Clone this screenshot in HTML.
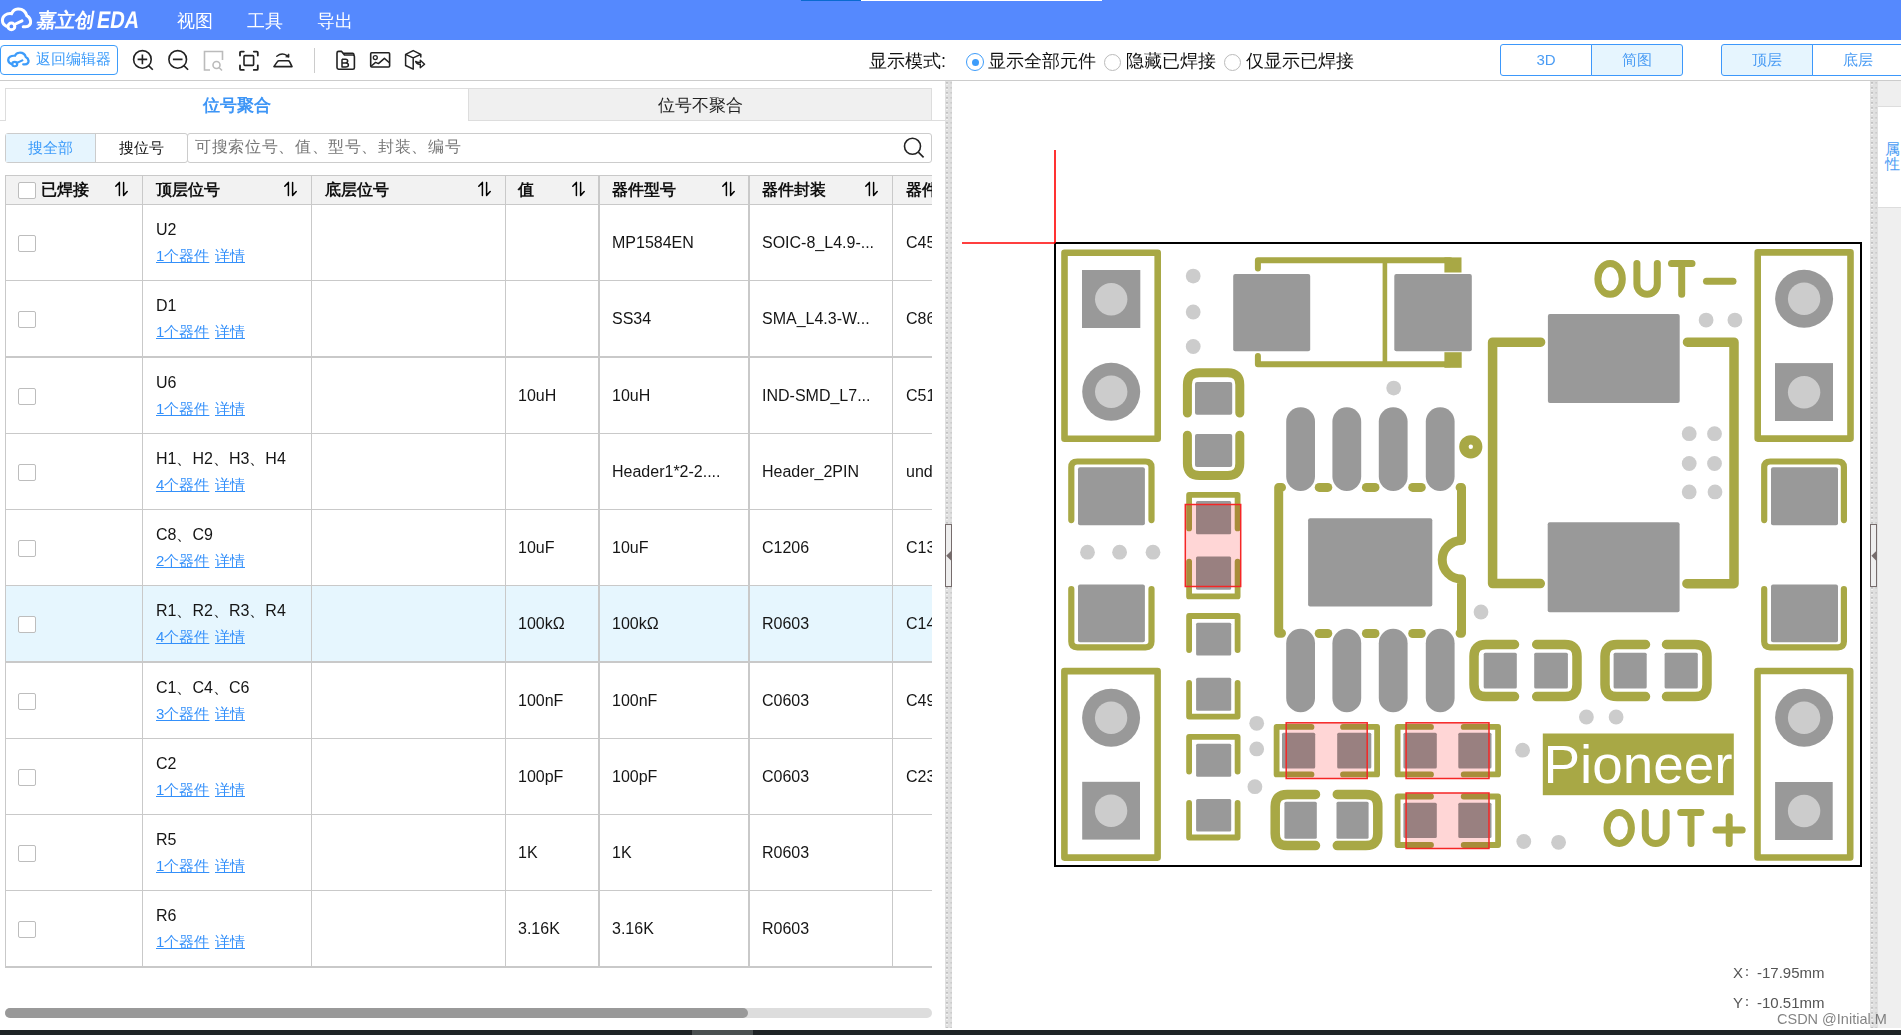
<!DOCTYPE html>
<html><head><meta charset="utf-8">
<style>
*{box-sizing:border-box;margin:0;padding:0}
html,body{width:1901px;height:1035px;overflow:hidden;background:#fff;font-family:"Liberation Sans",sans-serif;color:#222}
.abs{position:absolute;white-space:nowrap}
#hdr{left:0;top:0;width:1901px;height:40px;background:#5589fe}
#hdr .menu{color:#fff;font-size:18px;top:9px}
#tb{left:0;top:40px;width:1901px;height:41px;background:#fff;border-bottom:1px solid #ccc}
.btn{border:1px solid #3d9cfa;border-radius:4px;color:#3d9cfa}
.seg{border:1px solid #3d98fb;color:#4a9cf4;font-size:15px;text-align:center;line-height:30px}
.radio{width:18px;height:18px;border-radius:50%;border:1px solid #bbb}
.lbl{font-size:18px;color:#111;line-height:20px}
#split1,#split2{top:81px;width:7px;height:947px;background:#ddd;
 background-image:radial-gradient(circle,#bbb 0.8px,transparent 1px);background-size:4px 4px}
table{border-collapse:collapse}
.cell{position:absolute;border-right:1px solid #ccc;border-bottom:1px solid #ccc}
.tx{font-size:16px;line-height:18px;color:#151515;position:absolute}
.lnk{font-size:15px;line-height:18px;color:#3490fa;text-decoration:underline;position:absolute}
.cb{position:absolute;width:18px;height:17px;border:1px solid #bdbdbd;border-radius:2px;background:#fff}
.hd{font-size:16px;font-weight:bold;color:#111;position:absolute;top:179px}
.sort{position:absolute;top:180px;font-size:14px;color:#222}
</style></head><body>
<!-- header -->
<div id="hdr" class="abs">
  <svg class="abs" style="left:0;top:0" width="150" height="40" viewBox="0 0 150 40">
    <path d="M23.2 26.8 H25.5 C29 26.8 31 24 30.6 21.3 C30.2 18.5 28.5 16.5 26.8 15.6 C25.5 11.3 22 8.7 17.8 9 C14.8 9.2 12.6 11.2 11.6 13.7 C6.5 13 2.4 16 2.4 20.2 C2.4 23 4.2 25.2 6.6 26.3" fill="none" stroke="#fff" stroke-width="3" stroke-linecap="round"/>
    <circle cx="11.4" cy="26.4" r="3.4" fill="none" stroke="#fff" stroke-width="3"/>
    <path d="M14.4 24.5 L22 20.8" stroke="#fff" stroke-width="3" stroke-linecap="round"/>
    <g transform="skewX(-9)" fill="#fff">
      <text x="40" y="27.5" font-size="20" font-weight="bold" textLength="58" lengthAdjust="spacingAndGlyphs">嘉立创</text>
      <text x="100.5" y="28.2" font-size="24" font-weight="bold" font-family="Liberation Sans" textLength="42" lengthAdjust="spacingAndGlyphs">EDA</text>
    </g>
  </svg>
  <div class="abs" style="left:801px;top:0;width:60px;height:1px;background:#0a6ad0"></div>
  <div class="abs" style="left:861px;top:0;width:241px;height:1px;background:#fff"></div>
  <div class="abs menu" style="left:177px">视图</div>
  <div class="abs menu" style="left:247px">工具</div>
  <div class="abs menu" style="left:317px">导出</div>
</div>
<!-- toolbar -->
<div id="tb" class="abs">
  <div class="abs btn" style="left:0;top:5px;width:118px;height:30px"></div>
  <svg class="abs" style="left:0;top:0" width="40" height="40" viewBox="0 0 40 40"><g transform="translate(6.5,6.8) scale(0.72,0.655)"><path d="M23.2 26.8 H25.5 C29 26.8 31 24 30.6 21.3 C30.2 18.5 28.5 16.5 26.8 15.6 C25.5 11.3 22 8.7 17.8 9 C14.8 9.2 12.6 11.2 11.6 13.7 C6.5 13 2.4 16 2.4 20.2 C2.4 23 4.2 25.2 6.6 26.3" fill="none" stroke="#3d9cfa" stroke-width="3.2" stroke-linecap="round"/><circle cx="11.4" cy="26.4" r="3.4" fill="none" stroke="#3d9cfa" stroke-width="3.2"/><path d="M14.4 24.5 L22 20.8" stroke="#3d9cfa" stroke-width="3.2" stroke-linecap="round"/></g></svg>
  <div class="abs" style="left:36px;top:10px;font-size:15px;line-height:17px;color:#3d9cfa">返回编辑器</div>
  <svg class="abs" style="left:0;top:0" width="440" height="40" viewBox="0 40 440 40" fill="none" stroke="#222" stroke-width="1.6">
    <circle cx="142.4" cy="59.4" r="8.8"/><path d="M148.6 65.6 L152.8 69.8 M137.6 59.4 H147.2 M142.4 54.6 V64.2"/>
    <circle cx="177.7" cy="59.4" r="8.8"/><path d="M183.9 65.6 L188.1 69.8 M172.9 59.4 H182.5"/>
    <g stroke="#bbb"><path d="M215 51.5 H204.5 V70 H210 M222.5 60 V51.5 H215"/><circle cx="216.5" cy="65" r="3.5"/><path d="M219 67.5 L222 70.5"/></g>
    <path d="M240 55.5 V52.6 Q240 51.6 241 51.6 H243.8 M253.8 51.6 H256.8 Q257.8 51.6 257.8 52.6 V55.5 M257.8 65.5 V68.9 Q257.8 69.9 256.8 69.9 H253.8 M243.8 69.9 H241 Q240 69.9 240 68.9 V65.5" stroke-width="1.8" stroke-linecap="round"/>
    <rect x="244" y="55.6" width="9.6" height="9.8" rx="0.8" stroke-width="1.6"/>
    <path d="M273.9 66.6 L277.4 61.6 Q278 60.7 279.2 60.7 H288 Q289.2 60.7 289.6 61.6 L292 66.6 Z" stroke-width="1.6" stroke-linejoin="round"/>
    <path d="M276.8 56.2 Q282 52.2 287 55.6" stroke-width="1.4" stroke-linecap="round"/><path d="M288.9 53.9 L289 57.3 L285.7 56.8 Z" fill="#222" stroke-width="0.8" stroke-linejoin="round"/>
    <path d="M314.5 48 V73" stroke="#ccc" stroke-width="1"/>
    <path d="M337 67.6 V53 Q337 51.4 338.6 51.4 H341.6 L344.5 55 H352.9 Q354.4 55 354.4 56.5 V67.7 Q354.4 69.2 352.9 69.2 H338.6 Q337 69.2 337 67.6 Z" stroke-width="1.6" stroke-linejoin="round"/>
    <path d="M343.6 53.3 H352.6 Q353.9 53.3 353.9 54.8" stroke-width="1.5" stroke-linecap="round"/>
    <path d="M342 59.2 H345.6 Q347.7 59.2 347.7 61.1 Q347.7 62.9 345.4 62.9 H342 M345.4 62.9 Q348.4 62.9 348.4 64.9 Q348.4 66.9 345.6 66.9 H342 V59.2" stroke-width="1.5" stroke-linejoin="round"/>
    <rect x="370.7" y="52.7" width="18.9" height="14.3" rx="1" stroke-width="1.6"/>
    <circle cx="375.3" cy="57.6" r="2" stroke-width="1.3"/>
    <path d="M371 66.3 L375.6 62.4 L378.4 63.6 L384.4 58.4 L389.4 62.8" stroke-width="1.5" stroke-linejoin="round"/>
    <path d="M413.2 50.6 L405.6 54.4 L413.2 57.9 L420.8 54.4 Z M405.6 54.4 V65.5 L413.2 69.2 V57.9 M420.8 54.4 V57.6" stroke-width="1.5" stroke-linejoin="round"/>
    <path d="M415.6 61.4 C416.2 63.6 417.8 64.5 420.3 64.3 V67.8 L424.6 64.2 L420.3 60.3 V62.5 C418.4 62.6 416.8 62.4 415.6 61.4 Z" stroke-width="1.4" stroke-linejoin="round"/>
  </svg>
  <div class="abs lbl" style="left:869px;top:11px">显示模式:</div>
  <div class="abs radio" style="left:966px;top:13px;border-color:#3d9cfa"></div>
  <div class="abs" style="left:971.5px;top:18.5px;width:7px;height:7px;border-radius:50%;background:#3d9cfa"></div>
  <div class="abs lbl" style="left:987.5px;top:11px">显示全部元件</div>
  <div class="abs radio" style="left:1103.5px;top:13.5px;width:17px;height:17px"></div>
  <div class="abs lbl" style="left:1126px;top:11px">隐藏已焊接</div>
  <div class="abs radio" style="left:1223.5px;top:13.5px;width:17px;height:17px"></div>
  <div class="abs lbl" style="left:1246px;top:11px">仅显示已焊接</div>
  <div class="abs seg" style="left:1500px;top:4px;width:92px;height:32px;border-radius:3px 0 0 3px">3D</div>
  <div class="abs seg" style="left:1591px;top:4px;width:92px;height:32px;border-radius:0 3px 3px 0;background:#e6f5fe">简图</div>
  <div class="abs seg" style="left:1721px;top:4px;width:92px;height:32px;border-radius:3px 0 0 3px;background:#e6f5fe">顶层</div>
  <div class="abs seg" style="left:1812px;top:4px;width:92px;height:32px;border-radius:0 3px 3px 0">底层</div>
</div>
<!--LEFT-->
<div class="abs" style="left:0;top:120px;width:5px;height:1px;background:#ddd"></div>
<div class="abs" style="left:932px;top:120px;width:13px;height:1px;background:#ddd"></div>
<div class="abs" style="left:5px;top:88px;width:464px;height:33px;border:1px solid #ddd;border-bottom:none;background:#fff"></div>
<div class="abs" style="left:203px;top:96px;font-size:17px;line-height:20px;font-weight:bold;color:#3d95f6">位号聚合</div>
<div class="abs" style="left:468px;top:88px;width:464px;height:33px;border:1px solid #ddd;background:#f0f0f0"></div>
<div class="abs" style="left:658px;top:96px;font-size:17px;line-height:20px;color:#222">位号不聚合</div>
<div class="abs" style="left:5px;top:133px;width:183px;height:30px;border:1px solid #ccc;border-radius:3px;background:#fff"></div>
<div class="abs" style="left:6px;top:134px;width:90px;height:28px;background:#e6f5fe;border-right:1px solid #ccc"></div>
<div class="abs" style="left:28px;top:139px;font-size:15px;line-height:18px;color:#3d9cfa">搜全部</div>
<div class="abs" style="left:119px;top:139px;font-size:15px;line-height:18px;color:#111">搜位号</div>
<div class="abs" style="left:187px;top:133px;width:745px;height:30px;border:1px solid #ccc;border-radius:3px;background:#fff"></div>
<div class="abs" style="left:195px;top:137px;letter-spacing:0.65px;font-size:16px;line-height:20px;color:#777">可搜索位号、值、型号、封装、编号</div>
<svg class="abs" style="left:900px;top:134px" width="30" height="28" viewBox="900 134 30 28"><circle cx="912.5" cy="146.3" r="8" fill="none" stroke="#222" stroke-width="1.6"/><path d="M918.3 152.1 L923.6 157.4" stroke="#222" stroke-width="1.6"/></svg>
<div class="abs" style="left:0;top:0;width:932px;height:1035px;overflow:hidden">
<div class="abs" style="left:5px;top:175px;width:1000px;height:29px;background:#f2f2f2"></div>
<div class="abs" style="left:5px;top:585px;width:1000px;height:76px;background:#e6f6fe"></div>
<div class="abs" style="left:5px;top:175px;width:1000px;height:1px;background:#c9c9c9"></div>
<div class="abs" style="left:5px;top:204px;width:1000px;height:1px;background:#c9c9c9"></div>
<div class="abs" style="left:5px;top:280px;width:1000px;height:1px;background:#c9c9c9"></div>
<div class="abs" style="left:5px;top:356px;width:1000px;height:2px;background:#c9c9c9"></div>
<div class="abs" style="left:5px;top:433px;width:1000px;height:1px;background:#c9c9c9"></div>
<div class="abs" style="left:5px;top:509px;width:1000px;height:1px;background:#c9c9c9"></div>
<div class="abs" style="left:5px;top:585px;width:1000px;height:1px;background:#c9c9c9"></div>
<div class="abs" style="left:5px;top:661px;width:1000px;height:2px;background:#c9c9c9"></div>
<div class="abs" style="left:5px;top:738px;width:1000px;height:1px;background:#c9c9c9"></div>
<div class="abs" style="left:5px;top:814px;width:1000px;height:1px;background:#c9c9c9"></div>
<div class="abs" style="left:5px;top:890px;width:1000px;height:1px;background:#c9c9c9"></div>
<div class="abs" style="left:5px;top:966px;width:1000px;height:2px;background:#c9c9c9"></div>
<div class="abs" style="left:5px;top:175px;width:1px;height:793px;background:#c9c9c9"></div>
<div class="abs" style="left:142px;top:175px;width:1px;height:793px;background:#c9c9c9"></div>
<div class="abs" style="left:311px;top:175px;width:1px;height:793px;background:#c9c9c9"></div>
<div class="abs" style="left:505px;top:175px;width:1px;height:793px;background:#c9c9c9"></div>
<div class="abs" style="left:598px;top:175px;width:2px;height:793px;background:#c9c9c9"></div>
<div class="abs" style="left:748px;top:175px;width:2px;height:793px;background:#c9c9c9"></div>
<div class="abs" style="left:892px;top:175px;width:1px;height:793px;background:#c9c9c9"></div>
<div class="abs hd" style="left:41px;top:180px;line-height:19px">已焊接</div>
<div class="abs hd" style="left:156px;top:180px;line-height:19px">顶层位号</div>
<div class="abs hd" style="left:325px;top:180px;line-height:19px">底层位号</div>
<div class="abs hd" style="left:518px;top:180px;line-height:19px">值</div>
<div class="abs hd" style="left:612px;top:180px;line-height:19px">器件型号</div>
<div class="abs hd" style="left:762px;top:180px;line-height:19px">器件封装</div>
<div class="abs hd" style="left:906px;top:180px;line-height:19px">器件</div>
<svg class="abs" style="left:115px;top:181px" width="14" height="16" viewBox="0 0 14 16"><path d="M0.8 5.2 L4.4 1.4 V14.5 M8.6 1.4 V14.5 L12.2 10.6" fill="none" stroke="#000" stroke-width="1.5" stroke-linecap="round" stroke-linejoin="round"/></svg>
<svg class="abs" style="left:284px;top:181px" width="14" height="16" viewBox="0 0 14 16"><path d="M0.8 5.2 L4.4 1.4 V14.5 M8.6 1.4 V14.5 L12.2 10.6" fill="none" stroke="#000" stroke-width="1.5" stroke-linecap="round" stroke-linejoin="round"/></svg>
<svg class="abs" style="left:478px;top:181px" width="14" height="16" viewBox="0 0 14 16"><path d="M0.8 5.2 L4.4 1.4 V14.5 M8.6 1.4 V14.5 L12.2 10.6" fill="none" stroke="#000" stroke-width="1.5" stroke-linecap="round" stroke-linejoin="round"/></svg>
<svg class="abs" style="left:572px;top:181px" width="14" height="16" viewBox="0 0 14 16"><path d="M0.8 5.2 L4.4 1.4 V14.5 M8.6 1.4 V14.5 L12.2 10.6" fill="none" stroke="#000" stroke-width="1.5" stroke-linecap="round" stroke-linejoin="round"/></svg>
<svg class="abs" style="left:722px;top:181px" width="14" height="16" viewBox="0 0 14 16"><path d="M0.8 5.2 L4.4 1.4 V14.5 M8.6 1.4 V14.5 L12.2 10.6" fill="none" stroke="#000" stroke-width="1.5" stroke-linecap="round" stroke-linejoin="round"/></svg>
<svg class="abs" style="left:865px;top:181px" width="14" height="16" viewBox="0 0 14 16"><path d="M0.8 5.2 L4.4 1.4 V14.5 M8.6 1.4 V14.5 L12.2 10.6" fill="none" stroke="#000" stroke-width="1.5" stroke-linecap="round" stroke-linejoin="round"/></svg>
<div class="cb" style="left:18px;top:182px"></div>
<div class="cb" style="left:18px;top:235px"></div>
<div class="abs tx" style="left:156px;top:221px">U2</div>
<div class="abs lnk" style="left:156px;top:247px">1个器件</div>
<div class="abs lnk" style="left:215px;top:247px">详情</div>
<div class="abs tx" style="left:612px;top:234px">MP1584EN</div>
<div class="abs tx" style="left:762px;top:234px">SOIC-8_L4.9-...</div>
<div class="abs tx" style="left:906px;top:234px">C45</div>
<div class="cb" style="left:18px;top:311px"></div>
<div class="abs tx" style="left:156px;top:297px">D1</div>
<div class="abs lnk" style="left:156px;top:323px">1个器件</div>
<div class="abs lnk" style="left:215px;top:323px">详情</div>
<div class="abs tx" style="left:612px;top:310px">SS34</div>
<div class="abs tx" style="left:762px;top:310px">SMA_L4.3-W...</div>
<div class="abs tx" style="left:906px;top:310px">C86</div>
<div class="cb" style="left:18px;top:388px"></div>
<div class="abs tx" style="left:156px;top:374px">U6</div>
<div class="abs lnk" style="left:156px;top:400px">1个器件</div>
<div class="abs lnk" style="left:215px;top:400px">详情</div>
<div class="abs tx" style="left:518px;top:387px">10uH</div>
<div class="abs tx" style="left:612px;top:387px">10uH</div>
<div class="abs tx" style="left:762px;top:387px">IND-SMD_L7...</div>
<div class="abs tx" style="left:906px;top:387px">C51</div>
<div class="cb" style="left:18px;top:464px"></div>
<div class="abs tx" style="left:156px;top:450px">H1、H2、H3、H4</div>
<div class="abs lnk" style="left:156px;top:476px">4个器件</div>
<div class="abs lnk" style="left:215px;top:476px">详情</div>
<div class="abs tx" style="left:612px;top:463px">Header1*2-2....</div>
<div class="abs tx" style="left:762px;top:463px">Header_2PIN</div>
<div class="abs tx" style="left:906px;top:463px">und</div>
<div class="cb" style="left:18px;top:540px"></div>
<div class="abs tx" style="left:156px;top:526px">C8、C9</div>
<div class="abs lnk" style="left:156px;top:552px">2个器件</div>
<div class="abs lnk" style="left:215px;top:552px">详情</div>
<div class="abs tx" style="left:518px;top:539px">10uF</div>
<div class="abs tx" style="left:612px;top:539px">10uF</div>
<div class="abs tx" style="left:762px;top:539px">C1206</div>
<div class="abs tx" style="left:906px;top:539px">C13</div>
<div class="cb" style="left:18px;top:616px"></div>
<div class="abs tx" style="left:156px;top:602px">R1、R2、R3、R4</div>
<div class="abs lnk" style="left:156px;top:628px">4个器件</div>
<div class="abs lnk" style="left:215px;top:628px">详情</div>
<div class="abs tx" style="left:518px;top:615px">100kΩ</div>
<div class="abs tx" style="left:612px;top:615px">100kΩ</div>
<div class="abs tx" style="left:762px;top:615px">R0603</div>
<div class="abs tx" style="left:906px;top:615px">C14</div>
<div class="cb" style="left:18px;top:693px"></div>
<div class="abs tx" style="left:156px;top:679px">C1、C4、C6</div>
<div class="abs lnk" style="left:156px;top:705px">3个器件</div>
<div class="abs lnk" style="left:215px;top:705px">详情</div>
<div class="abs tx" style="left:518px;top:692px">100nF</div>
<div class="abs tx" style="left:612px;top:692px">100nF</div>
<div class="abs tx" style="left:762px;top:692px">C0603</div>
<div class="abs tx" style="left:906px;top:692px">C49</div>
<div class="cb" style="left:18px;top:769px"></div>
<div class="abs tx" style="left:156px;top:755px">C2</div>
<div class="abs lnk" style="left:156px;top:781px">1个器件</div>
<div class="abs lnk" style="left:215px;top:781px">详情</div>
<div class="abs tx" style="left:518px;top:768px">100pF</div>
<div class="abs tx" style="left:612px;top:768px">100pF</div>
<div class="abs tx" style="left:762px;top:768px">C0603</div>
<div class="abs tx" style="left:906px;top:768px">C23</div>
<div class="cb" style="left:18px;top:845px"></div>
<div class="abs tx" style="left:156px;top:831px">R5</div>
<div class="abs lnk" style="left:156px;top:857px">1个器件</div>
<div class="abs lnk" style="left:215px;top:857px">详情</div>
<div class="abs tx" style="left:518px;top:844px">1K</div>
<div class="abs tx" style="left:612px;top:844px">1K</div>
<div class="abs tx" style="left:762px;top:844px">R0603</div>
<div class="cb" style="left:18px;top:921px"></div>
<div class="abs tx" style="left:156px;top:907px">R6</div>
<div class="abs lnk" style="left:156px;top:933px">1个器件</div>
<div class="abs lnk" style="left:215px;top:933px">详情</div>
<div class="abs tx" style="left:518px;top:920px">3.16K</div>
<div class="abs tx" style="left:612px;top:920px">3.16K</div>
<div class="abs tx" style="left:762px;top:920px">R0603</div>
</div>
<div class="abs" style="left:5px;top:1008px;width:927px;height:10px;border-radius:5px;background:#ddd"></div>
<div class="abs" style="left:5px;top:1008px;width:743px;height:10px;border-radius:5px;background:#999"></div>
<!--/LEFT-->
<!--PCB-->
<svg class="abs" style="left:952px;top:81px" width="918" height="947" viewBox="952 81 918 947"><rect x="1055" y="243" width="806" height="623" fill="none" stroke="#000" stroke-width="2"/><path d="M1055 150 V243 M962 243 H1055" stroke="#f00" stroke-width="1.6" fill="none"/><path d="M1064.5 252.7 H1157.7 V438.8 H1064.5 Z" fill="none" stroke="#a8a845" stroke-width="6.6" stroke-linecap="round" stroke-linejoin="round"/><path d="M1757.7 252.4 H1850.5 V438.6 H1757.7 Z" fill="none" stroke="#a8a845" stroke-width="6.6" stroke-linecap="round" stroke-linejoin="round"/><path d="M1064.4 671.1 H1157.6 V857.6 H1064.4 Z" fill="none" stroke="#a8a845" stroke-width="6.6" stroke-linecap="round" stroke-linejoin="round"/><path d="M1757.5 671.0 H1850.2 V857.5 H1757.5 Z" fill="none" stroke="#a8a845" stroke-width="6.6" stroke-linecap="round" stroke-linejoin="round"/><rect x="1082.0" y="270.0" width="58.3" height="58.0" rx="0.0" fill="#999999"/><circle cx="1111.2" cy="299.2" r="16.2" fill="#cccccc"/><circle cx="1111.2" cy="391.7" r="29.0" fill="#999999"/><circle cx="1111.2" cy="391.7" r="16.2" fill="#cccccc"/><circle cx="1804.1" cy="298.8" r="29.0" fill="#999999"/><circle cx="1804.1" cy="298.8" r="16.2" fill="#cccccc"/><rect x="1775.0" y="363.1" width="58.0" height="57.9" rx="0.0" fill="#999999"/><circle cx="1804.1" cy="392.2" r="16.2" fill="#cccccc"/><circle cx="1111.1" cy="717.8" r="29.0" fill="#999999"/><circle cx="1111.1" cy="717.8" r="16.2" fill="#cccccc"/><rect x="1082.2" y="781.8" width="57.8" height="57.8" rx="0.0" fill="#999999"/><circle cx="1111.1" cy="810.7" r="16.2" fill="#cccccc"/><circle cx="1804.1" cy="717.7" r="29.0" fill="#999999"/><circle cx="1804.1" cy="717.7" r="16.2" fill="#cccccc"/><rect x="1775.1" y="782.0" width="57.6" height="58.0" rx="0.0" fill="#999999"/><circle cx="1804.1" cy="811.0" r="16.2" fill="#cccccc"/><circle cx="1193.2" cy="276.1" r="7.4" fill="#cccccc"/><circle cx="1193.2" cy="312.0" r="7.4" fill="#cccccc"/><circle cx="1193.2" cy="346.5" r="7.4" fill="#cccccc"/><circle cx="1393.7" cy="388.1" r="7.4" fill="#cccccc"/><circle cx="1706.1" cy="320.1" r="7.4" fill="#cccccc"/><circle cx="1734.9" cy="320.1" r="7.4" fill="#cccccc"/><circle cx="1689.2" cy="433.7" r="7.4" fill="#cccccc"/><circle cx="1714.5" cy="433.7" r="7.4" fill="#cccccc"/><circle cx="1689.2" cy="463.5" r="7.4" fill="#cccccc"/><circle cx="1714.5" cy="463.5" r="7.4" fill="#cccccc"/><circle cx="1689.2" cy="491.9" r="7.4" fill="#cccccc"/><circle cx="1715.0" cy="491.9" r="7.4" fill="#cccccc"/><circle cx="1087.5" cy="552.2" r="7.4" fill="#cccccc"/><circle cx="1119.6" cy="552.2" r="7.4" fill="#cccccc"/><circle cx="1153.0" cy="552.2" r="7.4" fill="#cccccc"/><circle cx="1481.0" cy="612.0" r="7.4" fill="#cccccc"/><circle cx="1256.7" cy="723.3" r="7.4" fill="#cccccc"/><circle cx="1256.7" cy="748.9" r="7.4" fill="#cccccc"/><circle cx="1254.9" cy="786.7" r="7.4" fill="#cccccc"/><circle cx="1586.4" cy="717.0" r="7.4" fill="#cccccc"/><circle cx="1616.1" cy="717.0" r="7.4" fill="#cccccc"/><circle cx="1522.6" cy="750.2" r="7.4" fill="#cccccc"/><circle cx="1523.8" cy="841.5" r="7.4" fill="#cccccc"/><circle cx="1558.6" cy="842.3" r="7.4" fill="#cccccc"/><rect x="1233.2" y="274.0" width="77.0" height="77.2" rx="2.0" fill="#999999"/><rect x="1394.3" y="274.1" width="77.5" height="77.1" rx="2.0" fill="#999999"/><path d="M1257.9 268.4 V260.3 H1450 M1257.9 356 V364.2 H1450" fill="none" stroke="#a8a845" stroke-width="6.0" stroke-linecap="round" stroke-linejoin="round"/><path d="M1384.9 260.3 V364.2" fill="none" stroke="#a8a845" stroke-width="4.6" stroke-linecap="butt" stroke-linejoin="round"/><rect x="1444.4" y="257.4" width="17.1" height="15.1" rx="0.0" fill="#a8a845"/><rect x="1444.4" y="352.2" width="17.3" height="15.6" rx="0.0" fill="#a8a845"/><rect x="1195.0" y="382.0" width="37.2" height="32.8" rx="2.0" fill="#999999"/><rect x="1195.0" y="434.1" width="37.2" height="32.9" rx="2.0" fill="#999999"/><path d="M1187.4 413 V384.7 Q1187.4 372.7 1199.4 372.7 H1227.8 Q1239.8 372.7 1239.8 384.7 V413" fill="none" stroke="#a8a845" stroke-width="9.0" stroke-linecap="round" stroke-linejoin="round"/><path d="M1187.4 435.2 V463.5 Q1187.4 475.5 1199.4 475.5 H1227.8 Q1239.8 475.5 1239.8 463.5 V435.2" fill="none" stroke="#a8a845" stroke-width="9.0" stroke-linecap="round" stroke-linejoin="round"/><rect x="1078.0" y="467.3" width="66.9" height="57.9" rx="2.0" fill="#999999"/><rect x="1078.0" y="584.4" width="66.9" height="57.8" rx="2.0" fill="#999999"/><path d="M1071.3 520.1 V467.3 Q1071.3 461.5 1077.3 461.5 H1145.5 Q1151.5 461.5 1151.5 467.3 V520.1" fill="none" stroke="#a8a845" stroke-width="6.2" stroke-linecap="round" stroke-linejoin="round"/><path d="M1071.3 589.1 V641.5 Q1071.3 647.3 1077.3 647.3 H1145.5 Q1151.5 647.3 1151.5 641.5 V589.1" fill="none" stroke="#a8a845" stroke-width="6.2" stroke-linecap="round" stroke-linejoin="round"/><rect x="1771.0" y="467.3" width="67.0" height="57.9" rx="2.0" fill="#999999"/><rect x="1771.0" y="584.4" width="67.0" height="57.8" rx="2.0" fill="#999999"/><path d="M1764.2 520.1 V467.3 Q1764.2 461.5 1770.2 461.5 H1837.9 Q1843.9 461.5 1843.9 467.3 V520.1" fill="none" stroke="#a8a845" stroke-width="6.2" stroke-linecap="round" stroke-linejoin="round"/><path d="M1764.2 589.1 V641.5 Q1764.2 647.3 1770.2 647.3 H1837.9 Q1843.9 647.3 1843.9 641.5 V589.1" fill="none" stroke="#a8a845" stroke-width="6.2" stroke-linecap="round" stroke-linejoin="round"/><rect x="1196.0" y="500.9" width="35.1" height="33.4" rx="1.5" fill="#999999"/><rect x="1196.0" y="556.6" width="35.1" height="33.1" rx="1.5" fill="#999999"/><path d="M1189.1 528.4 V494.9 H1237.6 V528.4 M1189.1 561.6 V596.4 H1237.6 V561.6" fill="none" stroke="#a8a845" stroke-width="5.8" stroke-linecap="round" stroke-linejoin="round"/><rect x="1196.1" y="622.7" width="35.1" height="32.7" rx="1.5" fill="#999999"/><rect x="1196.1" y="677.8" width="35.1" height="32.9" rx="1.5" fill="#999999"/><path d="M1189.1 650.1 V616 H1237.6 V650.1 M1189.1 682.8 V716.6 H1237.6 V682.8" fill="none" stroke="#a8a845" stroke-width="5.8" stroke-linecap="round" stroke-linejoin="round"/><rect x="1196.1" y="743.8" width="35.1" height="32.9" rx="1.5" fill="#999999"/><rect x="1196.1" y="798.9" width="35.1" height="32.7" rx="1.5" fill="#999999"/><path d="M1189.1 771.5 V736.8 H1237.6 V771.5 M1189.1 802.9 V837.5 H1237.6 V802.9" fill="none" stroke="#a8a845" stroke-width="5.8" stroke-linecap="round" stroke-linejoin="round"/><rect x="1286.2" y="407.3" width="28.8" height="83.6" rx="14.4" fill="#999999"/><rect x="1286.2" y="628.8" width="28.8" height="83.5" rx="14.4" fill="#999999"/><rect x="1332.4" y="407.3" width="28.8" height="83.6" rx="14.4" fill="#999999"/><rect x="1332.4" y="628.8" width="28.8" height="83.5" rx="14.4" fill="#999999"/><rect x="1378.8" y="407.3" width="28.8" height="83.6" rx="14.4" fill="#999999"/><rect x="1378.8" y="628.8" width="28.8" height="83.5" rx="14.4" fill="#999999"/><rect x="1425.8" y="407.3" width="28.8" height="83.6" rx="14.4" fill="#999999"/><rect x="1425.8" y="628.8" width="28.8" height="83.5" rx="14.4" fill="#999999"/><rect x="1308.1" y="518.2" width="124.2" height="88.3" rx="2.0" fill="#999999"/><path d="M1281.5 487.4 H1278.7 V633.2 H1281.5" fill="none" stroke="#a8a845" stroke-width="9.0" stroke-linecap="round" stroke-linejoin="round"/><path d="M1460.1 487.4 H1461.5 V540.5 A19.3 19.3 0 0 0 1461.5 579.1 V633.2 H1460.1" fill="none" stroke="#a8a845" stroke-width="9.0" stroke-linecap="round" stroke-linejoin="round"/><path d="M1319.2 487.4 H1327.8" fill="none" stroke="#a8a845" stroke-width="9.0" stroke-linecap="round" stroke-linejoin="round"/><path d="M1319.2 633.5 H1327.8" fill="none" stroke="#a8a845" stroke-width="9.0" stroke-linecap="round" stroke-linejoin="round"/><path d="M1366.4 487.4 H1375.0" fill="none" stroke="#a8a845" stroke-width="9.0" stroke-linecap="round" stroke-linejoin="round"/><path d="M1366.4 633.5 H1375.0" fill="none" stroke="#a8a845" stroke-width="9.0" stroke-linecap="round" stroke-linejoin="round"/><path d="M1412.7 487.4 H1421.3" fill="none" stroke="#a8a845" stroke-width="9.0" stroke-linecap="round" stroke-linejoin="round"/><path d="M1412.7 633.5 H1421.3" fill="none" stroke="#a8a845" stroke-width="9.0" stroke-linecap="round" stroke-linejoin="round"/><circle cx="1470.8" cy="446.8" r="6.9" fill="none" stroke="#a8a845" stroke-width="9.4"/><rect x="1547.9" y="314.0" width="131.8" height="88.9" rx="2.0" fill="#999999"/><rect x="1547.7" y="522.3" width="131.9" height="90.0" rx="2.0" fill="#999999"/><path d="M1540.6 342.2 H1492.6 V583.6 H1540.3" fill="none" stroke="#a8a845" stroke-width="9.5" stroke-linecap="round" stroke-linejoin="round"/><path d="M1687.5 342.2 H1734 V583.7 H1686.9" fill="none" stroke="#a8a845" stroke-width="9.5" stroke-linecap="round" stroke-linejoin="round"/><path d="M1597.9 278.9 A12.2 15.45 0 1 0 1622.3 278.9 A12.2 15.45 0 1 0 1597.9 278.9 Z" fill="none" stroke="#a8a845" stroke-width="7.0" stroke-linecap="round" stroke-linejoin="round"/><path d="M1636.9 263.4 V284.1 A10.2 10.2 0 0 0 1657.3 284.1 V263.4" fill="none" stroke="#a8a845" stroke-width="7.0" stroke-linecap="round" stroke-linejoin="round"/><path d="M1671.5 263.4 H1692 M1681.7 263.4 V294.3" fill="none" stroke="#a8a845" stroke-width="7.0" stroke-linecap="round" stroke-linejoin="round"/><path d="M1706.5 281.2 H1733" fill="none" stroke="#a8a845" stroke-width="7.0" stroke-linecap="round" stroke-linejoin="round"/><path d="M1607 828 A12.2 15.5 0 1 0 1631.4 828 A12.2 15.5 0 1 0 1607 828 Z" fill="none" stroke="#a8a845" stroke-width="7.0" stroke-linecap="round" stroke-linejoin="round"/><path d="M1645.3 812.5 V833.2 A10.4 10.4 0 0 0 1666.1 833.2 V812.5" fill="none" stroke="#a8a845" stroke-width="7.0" stroke-linecap="round" stroke-linejoin="round"/><path d="M1680.7 812.5 H1700.9 M1691 812.5 V843.4" fill="none" stroke="#a8a845" stroke-width="7.0" stroke-linecap="round" stroke-linejoin="round"/><path d="M1716 830 H1742.2 M1729.2 816.8 V843.4" fill="none" stroke="#a8a845" stroke-width="7.0" stroke-linecap="round" stroke-linejoin="round"/><rect x="1542.8" y="733.5" width="191.0" height="61.7" rx="0.0" fill="#a8a845"/><text x="1543.5" y="783.3" font-family="Liberation Sans" font-size="54" fill="#fff" textLength="189" lengthAdjust="spacingAndGlyphs">Pioneer</text><path d="M1514.5 644.5 H1486.0 Q1474.0 644.5 1474.0 656.5 V684.6 Q1474.0 696.6 1486.0 696.6 H1514.5" fill="none" stroke="#a8a845" stroke-width="9.5" stroke-linecap="round" stroke-linejoin="round"/><path d="M1536.7 644.5 H1565.0 Q1577.0 644.5 1577.0 656.5 V684.6 Q1577.0 696.6 1565.0 696.6 H1536.7" fill="none" stroke="#a8a845" stroke-width="9.5" stroke-linecap="round" stroke-linejoin="round"/><rect x="1483.7" y="652.7" width="33.1" height="35.8" rx="1.5" fill="#999999"/><rect x="1534.2" y="652.7" width="33.7" height="35.8" rx="1.5" fill="#999999"/><path d="M1645.5 644.5 H1617.0 Q1605.0 644.5 1605.0 656.5 V684.6 Q1605.0 696.6 1617.0 696.6 H1645.5" fill="none" stroke="#a8a845" stroke-width="9.5" stroke-linecap="round" stroke-linejoin="round"/><path d="M1666.5 644.5 H1695.0 Q1707.0 644.5 1707.0 656.5 V684.6 Q1707.0 696.6 1695.0 696.6 H1666.5" fill="none" stroke="#a8a845" stroke-width="9.5" stroke-linecap="round" stroke-linejoin="round"/><rect x="1613.6" y="652.7" width="33.1" height="35.8" rx="1.5" fill="#999999"/><rect x="1664.6" y="652.7" width="33.2" height="35.8" rx="1.5" fill="#999999"/><path d="M1315.5 794.4 H1287.2 Q1275.2 794.4 1275.2 806.4 V833.6 Q1275.2 845.6 1287.2 845.6 H1315.5" fill="none" stroke="#a8a845" stroke-width="9.5" stroke-linecap="round" stroke-linejoin="round"/><path d="M1337.3 794.4 H1365.8 Q1377.8 794.4 1377.8 806.4 V833.6 Q1377.8 845.6 1365.8 845.6 H1337.3" fill="none" stroke="#a8a845" stroke-width="9.5" stroke-linecap="round" stroke-linejoin="round"/><rect x="1284.4" y="801.7" width="32.4" height="37.1" rx="1.5" fill="#999999"/><rect x="1336.5" y="801.7" width="32.1" height="37.1" rx="1.5" fill="#999999"/><path d="M1311.5 726.9 H1276.6 V774.4 H1311.5" fill="none" stroke="#a8a845" stroke-width="5.8" stroke-linecap="round" stroke-linejoin="round"/><path d="M1343.0 726.9 H1377.1 V774.4 H1343.0" fill="none" stroke="#a8a845" stroke-width="5.8" stroke-linecap="round" stroke-linejoin="round"/><rect x="1282.0" y="732.8" width="33.2" height="35.7" rx="1.5" fill="#999999"/><rect x="1337.2" y="732.8" width="34.1" height="35.7" rx="1.5" fill="#999999"/><path d="M1431.0 726.9 H1397.6 V774.4 H1431.0" fill="none" stroke="#a8a845" stroke-width="5.8" stroke-linecap="round" stroke-linejoin="round"/><path d="M1463.7 726.9 H1498.1 V774.4 H1463.7" fill="none" stroke="#a8a845" stroke-width="5.8" stroke-linecap="round" stroke-linejoin="round"/><rect x="1403.4" y="732.8" width="33.4" height="35.7" rx="1.5" fill="#999999"/><rect x="1458.3" y="732.8" width="33.2" height="35.7" rx="1.5" fill="#999999"/><path d="M1431.0 796.5 H1397.6 V845.0 H1431.0" fill="none" stroke="#a8a845" stroke-width="5.8" stroke-linecap="round" stroke-linejoin="round"/><path d="M1463.7 796.5 H1498.1 V845.0 H1463.7" fill="none" stroke="#a8a845" stroke-width="5.8" stroke-linecap="round" stroke-linejoin="round"/><rect x="1403.4" y="802.8" width="33.4" height="35.3" rx="1.5" fill="#999999"/><rect x="1458.3" y="802.8" width="33.2" height="35.3" rx="1.5" fill="#999999"/><rect x="1185.3" y="504.5" width="55.4" height="82.0" fill="#ffd6d6" style="mix-blend-mode:multiply"/><rect x="1185.3" y="504.5" width="55.4" height="82.0" fill="none" stroke="#f52626" stroke-width="1.5"/><rect x="1286.2" y="722.8" width="81.0" height="55.7" fill="#ffd6d6" style="mix-blend-mode:multiply"/><rect x="1286.2" y="722.8" width="81.0" height="55.7" fill="none" stroke="#f52626" stroke-width="1.5"/><rect x="1406.1" y="722.8" width="82.9" height="55.7" fill="#ffd6d6" style="mix-blend-mode:multiply"/><rect x="1406.1" y="722.8" width="82.9" height="55.7" fill="none" stroke="#f52626" stroke-width="1.5"/><rect x="1406.1" y="793.0" width="82.9" height="55.5" fill="#ffd6d6" style="mix-blend-mode:multiply"/><rect x="1406.1" y="793.0" width="82.9" height="55.5" fill="none" stroke="#f52626" stroke-width="1.5"/></svg>
<!--/PCB-->
<!-- splitters -->
<svg class="abs" style="left:945px;top:81px" width="7" height="947"><defs><pattern id="dots" width="7" height="5" patternUnits="userSpaceOnUse"><rect width="7" height="5" fill="#e0e0e0"/><rect x="1" y="1" width="2" height="1.6" fill="#c2c2c2"/><rect x="1" y="3" width="2" height="1" fill="#f2f2f2"/><rect x="5.5" y="1" width="1.2" height="1.6" fill="#c2c2c2"/></pattern></defs><rect width="7" height="947" fill="url(#dots)"/></svg>
<svg class="abs" style="left:1870px;top:81px" width="8" height="947"><rect width="8" height="947" fill="url(#dots)"/></svg>
<div class="abs" style="left:1878px;top:81px;width:23px;height:947px;background:#efefef"></div>
<div class="abs" style="left:1878px;top:106px;width:23px;height:102px;background:#fff;border-top:1px solid #ddd;border-bottom:1px solid #ddd"></div>
<div class="abs" style="left:1885px;top:141px;font-size:15px;line-height:15px;color:#4a9cf4;width:16px;white-space:normal">属性</div>
<!-- splitter handles -->
<div class="abs" style="left:945px;top:524px;width:7px;height:63px;background:#eee;border:1px solid #766c6c"></div>
<svg class="abs" style="left:945px;top:545px" width="7" height="20" viewBox="945 545 7 20"><path d="M946.2 555.8 L951.5 550.6 V561 Z" fill="#766c6c"/></svg>
<div class="abs" style="left:1870px;top:524px;width:7px;height:63px;background:#eee;border:1px solid #766c6c"></div>
<svg class="abs" style="left:1870px;top:545px" width="7" height="20" viewBox="1870 545 7 20"><path d="M1871.4 555.8 L1876.5 550.8 V561 Z" fill="#766c6c"/></svg>
<!-- coords -->
<div class="abs" style="left:1733px;top:964px;font-size:15px;line-height:17px;color:#555">X</div>
<div class="abs" style="left:1740px;top:963px;font-size:14px;line-height:17px;color:#555">：</div>
<div class="abs" style="left:1757px;top:964px;font-size:15px;line-height:17px;color:#555">-17.95mm</div>
<div class="abs" style="left:1733px;top:994px;font-size:15px;line-height:17px;color:#555">Y</div>
<div class="abs" style="left:1740px;top:993px;font-size:14px;line-height:17px;color:#555">：</div>
<div class="abs" style="left:1757px;top:994px;font-size:15px;line-height:17px;color:#555">-10.51mm</div>
<div class="abs" style="left:1777px;top:1011px;font-size:14.5px;line-height:17px;color:rgba(90,90,90,0.75)">CSDN @Initial.M</div>
<!-- bottom bar -->
<div class="abs" style="left:0;top:1030px;width:1901px;height:5px;background:#1e2325"></div>
<div class="abs" style="left:692px;top:1030px;width:61px;height:5px;background:#4a5050"></div>
</body></html>
